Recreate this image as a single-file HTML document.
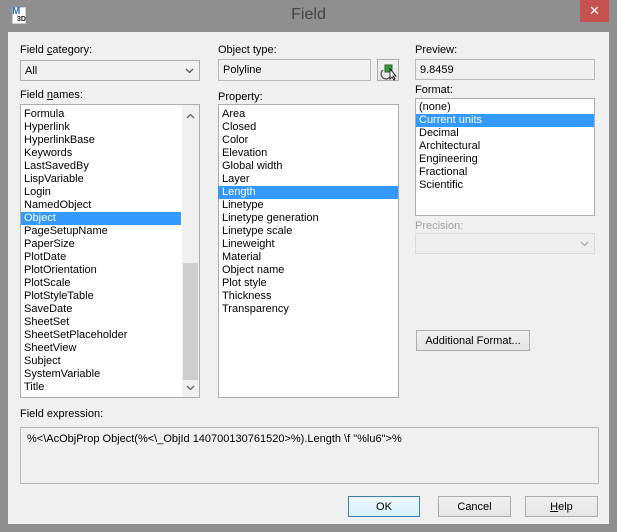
<!DOCTYPE html>
<html><head><meta charset="utf-8"><style>
*{box-sizing:border-box;margin:0;padding:0}
body{width:617px;height:532px;background:#8f8f8f;font-family:"Liberation Sans",sans-serif;font-size:11px;color:#000;position:relative;overflow:hidden}
.a{position:absolute}
.client{left:8px;top:32px;width:601px;height:492px;background:#f0f0f0}
.box{position:absolute;border:1px solid #abadb3;background:#fff}
.ro{background:#f0f0f0;border-color:#c8c8c8}
.lst div{height:13px;line-height:13px;padding-left:3px;white-space:nowrap}
.sel{background:#3399ff;color:#fff}
.btn{position:absolute;border:1px solid #acacac;background:linear-gradient(#f0f0f0,#e5e5e5);text-align:center;line-height:19px}
svg.ch{position:absolute}
u{text-decoration:underline}
</style></head><body>
<div class="a" style="left:12px;top:7px;width:14px;height:17px;background:#fff;border:1px solid #ccc"></div>
<div class="a" style="left:12px;top:6px;font-size:10px;font-weight:bold;color:#2a6fb8">M</div>
<div class="a" style="left:17px;top:16px;font-size:7px;font-weight:bold;color:#222">3D</div>
<div class="a" style="left:0;top:6px;width:617px;text-align:center;font-size:16px;color:#444">Field</div>
<div class="a" style="left:580px;top:0;width:29px;height:22px;background:#c75050;color:#fff;text-align:center;line-height:21px;font-size:13px">✕</div>
<div class="a client"></div>

<div class="a" style="left:20px;top:44px">Field <u>c</u>ategory:</div>
<div class="box" style="left:20px;top:60px;width:180px;height:21px;background:#f0f0f0;border-color:#acacac"><span class="a" style="left:4px;top:4px">All</span><svg class="ch" style="right:5px;top:7px" width="9" height="6"><path d="M1 1 L4.5 4.5 L8 1" fill="none" stroke="#555" stroke-width="1.3"/></svg></div>

<div class="a" style="left:20px;top:89px">Field <u>n</u>ames:</div>
<div class="box lst" style="left:20px;top:104px;width:180px;height:294px;padding-top:3px">
<div>Formula</div><div>Hyperlink</div><div>HyperlinkBase</div><div>Keywords</div><div>LastSavedBy</div><div>LispVariable</div><div>Login</div><div>NamedObject</div><div class="sel" style="width:160px">Object</div><div>PageSetupName</div><div>PaperSize</div><div>PlotDate</div><div>PlotOrientation</div><div>PlotScale</div><div>PlotStyleTable</div><div>SaveDate</div><div>SheetSet</div><div>SheetSetPlaceholder</div><div>SheetView</div><div>Subject</div><div>SystemVariable</div><div>Title</div>
<div class="a" style="left:161px;top:0;width:17px;height:292px;background:#f0f0f0"></div>
<div class="a" style="left:162px;top:158px;width:15px;height:117px;background:#cdcdcd"></div>
<svg class="ch" style="left:165px;top:8px" width="9" height="6"><path d="M1 5 L4.5 1.5 L8 5" fill="none" stroke="#666" stroke-width="1.3"/></svg>
<svg class="ch" style="left:165px;top:280px" width="9" height="6"><path d="M1 1 L4.5 4.5 L8 1" fill="none" stroke="#666" stroke-width="1.3"/></svg>
</div>

<div class="a" style="left:218px;top:44px">Object type:</div>
<div class="box ro" style="left:218px;top:59px;width:153px;height:22px;border-color:#bbb"><span class="a" style="left:4px;top:4px">Polyline</span></div>
<div class="btn" style="left:377px;top:59px;width:22px;height:22px"></div>
<svg class="a" style="left:379px;top:61px" width="20" height="20"><path d="M4 9 A5 5 0 1 0 12 14" fill="none" stroke="#555" stroke-width="1.3"/><rect x="6" y="4" width="7" height="7" fill="#3c9a3c" stroke="#2a6a2a"/><path d="M11 8 L11 18 L13 16 L15 19 L16 18 L14 15 L17 15 Z" fill="#fff" stroke="#000" stroke-width="0.8"/></svg>

<div class="a" style="left:218px;top:91px">Property:</div>
<div class="box lst" style="left:218px;top:104px;width:181px;height:294px;padding-top:3px">
<div>Area</div><div>Closed</div><div>Color</div><div>Elevation</div><div>Global width</div><div>Layer</div><div class="sel" style="margin-left:-1px;padding-left:4px">Length</div><div>Linetype</div><div>Linetype generation</div><div>Linetype scale</div><div>Lineweight</div><div>Material</div><div>Object name</div><div>Plot style</div><div>Thickness</div><div>Transparency</div>
</div>

<div class="a" style="left:415px;top:44px">Preview:</div>
<div class="box ro" style="left:415px;top:59px;width:180px;height:21px;border-color:#bbb"><span class="a" style="left:4px;top:4px">9.8459</span></div>
<div class="a" style="left:415px;top:84px">Format:</div>
<div class="box lst" style="left:415px;top:98px;width:180px;height:118px;padding-top:2px">
<div>(none)</div><div class="sel">Current units</div><div>Decimal</div><div>Architectural</div><div>Engineering</div><div>Fractional</div><div>Scientific</div>
</div>
<div class="a" style="left:415px;top:220px;color:#a0a0a0">Precision:</div>
<div class="box" style="left:415px;top:233px;width:180px;height:21px;background:#efefef;border-color:#d9d9d9"><svg class="ch" style="right:5px;top:7px" width="9" height="6"><path d="M1 1 L4.5 4.5 L8 1" fill="none" stroke="#aaa" stroke-width="1.3"/></svg></div>
<div class="btn" style="left:416px;top:330px;width:114px;height:21px;line-height:20px">Additional Format...</div>

<div class="a" style="left:20px;top:408px">Field expression:</div>
<div class="box ro" style="left:20px;top:427px;width:579px;height:57px;border-color:#bbb"><span class="a" style="left:6px;top:5px;white-space:nowrap">%&lt;\AcObjProp Object(%&lt;\_ObjId 140700130761520&gt;%).Length \f "%lu6"&gt;%</span></div>

<div class="btn" style="left:348px;top:496px;width:72px;height:21px;line-height:20px;border-color:#3c7fb1;background:linear-gradient(#eaf6fd,#d9f0fc)">OK</div>
<div class="btn" style="left:438px;top:496px;width:73px;height:21px;line-height:20px">Cancel</div>
<div class="btn" style="left:525px;top:496px;width:73px;height:21px;line-height:20px"><u>H</u>elp</div>
</body></html>
